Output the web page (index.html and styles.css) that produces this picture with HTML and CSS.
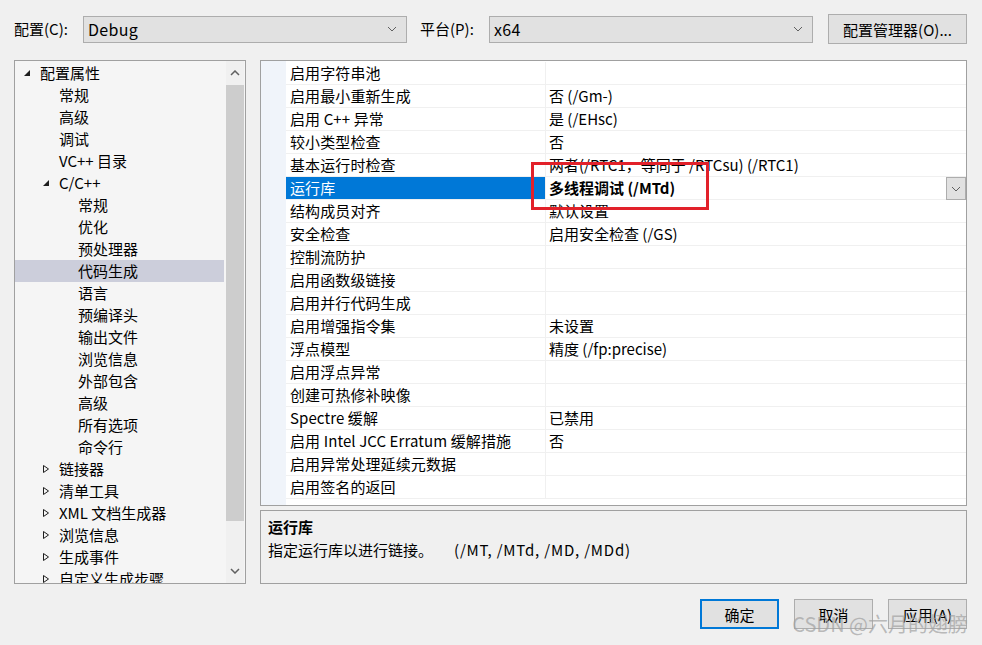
FILE: index.html
```html
<!DOCTYPE html>
<html lang="zh-CN">
<head>
  <meta charset="UTF-8" />
  <title>代码生成 属性页</title>
  <link rel="stylesheet" href="styles.css">
</head>
<body>

  <!-- Config bar -->
  <div class="topbar">
    <span class="lbl">配置(C):</span>
    <div class="combo"><span>Debug</span><svg class="chev" viewBox="0 0 10 6"><path d="M1 1l4 4 4-4" /></svg></div>
    <span class="lbl lbl2">平台(P):</span>
    <div class="combo"><span>x64</span><svg class="chev" viewBox="0 0 10 6"><path d="M1 1l4 4 4-4" /></svg></div>
    <button class="btn mgr">配置管理器(O)...</button>
  </div>

  <div class="main">
    <!-- Tree -->
    <div class="tree">
      <div class="tree-rows">
        <div class="node lv0"><svg class="tri" viewBox="0 0 8 8"><path d="M7 1v6H1z" /></svg>配置属性</div>
        <div class="node lv1">常规</div>
        <div class="node lv1">高级</div>
        <div class="node lv1">调试</div>
        <div class="node lv1">VC++ 目录</div>
        <div class="node lv1"><svg class="tri" viewBox="0 0 8 8"><path d="M7 1v6H1z" /></svg>C/C++</div>
        <div class="node lv2">常规</div>
        <div class="node lv2">优化</div>
        <div class="node lv2">预处理器</div>
        <div class="node lv2 sel">代码生成</div>
        <div class="node lv2">语言</div>
        <div class="node lv2">预编译头</div>
        <div class="node lv2">输出文件</div>
        <div class="node lv2">浏览信息</div>
        <div class="node lv2">外部包含</div>
        <div class="node lv2">高级</div>
        <div class="node lv2">所有选项</div>
        <div class="node lv2">命令行</div>
        <div class="node lv1"><svg class="tri open" viewBox="0 0 8 10"><path d="M1.5 1.5v7l5-3.5z" /></svg>链接器</div>
        <div class="node lv1"><svg class="tri open" viewBox="0 0 8 10"><path d="M1.5 1.5v7l5-3.5z" /></svg>清单工具</div>
        <div class="node lv1"><svg class="tri open" viewBox="0 0 8 10"><path d="M1.5 1.5v7l5-3.5z" /></svg>XML 文档生成器</div>
        <div class="node lv1"><svg class="tri open" viewBox="0 0 8 10"><path d="M1.5 1.5v7l5-3.5z" /></svg>浏览信息</div>
        <div class="node lv1"><svg class="tri open" viewBox="0 0 8 10"><path d="M1.5 1.5v7l5-3.5z" /></svg>生成事件</div>
        <div class="node lv1"><svg class="tri open" viewBox="0 0 8 10"><path d="M1.5 1.5v7l5-3.5z" /></svg>自定义生成步骤</div>
      </div>
      <div class="vscroll">
        <svg class="arrow" viewBox="0 0 10 6"><path d="M1 5l4-4 4 4" /></svg>
        <div class="thumb"></div>
        <svg class="arrow" viewBox="0 0 10 6"><path d="M1 1l4 4 4-4" /></svg>
      </div>
    </div>

    <div class="right">
      <!-- Property grid -->
      <div class="grid">
        <div class="gutter"></div>
        <div class="props">
          <div class="prow"><div class="pname">启用字符串池</div><div class="pval"></div></div>
          <div class="prow"><div class="pname">启用最小重新生成</div><div class="pval">否 (/Gm-)</div></div>
          <div class="prow"><div class="pname">启用 C++ 异常</div><div class="pval">是 (/EHsc)</div></div>
          <div class="prow"><div class="pname">较小类型检查</div><div class="pval">否</div></div>
          <div class="prow"><div class="pname">基本运行时检查</div><div class="pval">两者(/RTC1，等同于 /RTCsu) (/RTC1)</div></div>
          <div class="prow active"><div class="pname">运行库</div><div class="pval"><b>多线程调试 (/MTd)</b><span class="drop"><svg class="chev" viewBox="0 0 10 6"><path d="M1 1l4 4 4-4" /></svg></span></div></div>
          <div class="prow"><div class="pname">结构成员对齐</div><div class="pval">默认设置</div></div>
          <div class="prow"><div class="pname">安全检查</div><div class="pval">启用安全检查 (/GS)</div></div>
          <div class="prow"><div class="pname">控制流防护</div><div class="pval"></div></div>
          <div class="prow"><div class="pname">启用函数级链接</div><div class="pval"></div></div>
          <div class="prow"><div class="pname">启用并行代码生成</div><div class="pval"></div></div>
          <div class="prow"><div class="pname">启用增强指令集</div><div class="pval">未设置</div></div>
          <div class="prow"><div class="pname">浮点模型</div><div class="pval">精度 (/fp:precise)</div></div>
          <div class="prow"><div class="pname">启用浮点异常</div><div class="pval"></div></div>
          <div class="prow"><div class="pname">创建可热修补映像</div><div class="pval"></div></div>
          <div class="prow"><div class="pname">Spectre 缓解</div><div class="pval">已禁用</div></div>
          <div class="prow"><div class="pname">启用 Intel JCC Erratum 缓解措施</div><div class="pval">否</div></div>
          <div class="prow"><div class="pname">启用异常处理延续元数据</div><div class="pval"></div></div>
          <div class="prow"><div class="pname">启用签名的返回</div><div class="pval"></div></div>
        </div>
        <div class="mark"></div>
      </div>

      <!-- Description -->
      <div class="desc">
        <div class="desc-title">运行库</div>
        <div class="desc-text">指定运行库以进行链接。<span class="opts">(/MT, /MTd, /MD, /MDd)</span></div>
      </div>
    </div>
  </div>

  <!-- Buttons -->
  <div class="footer">
    <button class="btn ok">确定</button>
    <button class="btn">取消</button>
    <button class="btn">应用(A)</button>
  </div>

  <div class="watermark">CSDN @六月的翅膀</div>

</body>
</html>
```

FILE: styles.css
```css
body {
  margin: 0;
  width: 982px;
  height: 645px;
  background: #f0f0f0;
  font-family: "Noto Sans CJK SC", "Liberation Sans", sans-serif;
  font-size: 15px;
  color: #000;
  overflow: hidden;
  position: relative;
}
.topbar {
  display: flex;
  align-items: center;
  height: 30px;
  margin-top: 14px;
  padding-left: 14px;
}
.lbl {
  width: 69px;
  line-height: 20px;
}
.lbl2 {
  margin-left: 13px;
}
.combo {
  width: 309px;
  height: 25px;
  border: 1px solid #adadad;
  background: #e1e1e1;
  display: flex;
  align-items: center;
  justify-content: space-between;
  padding: 0 9px 0 4px;
  box-sizing: content-box;
  line-height: 20px;
}
.combo span {
  font-size: 16px;
  letter-spacing: 0.3px;
}
.chev {
  width: 10px;
  height: 6px;
  fill: none;
  stroke: #606060;
  stroke-width: 1;
}
.btn {
  font-family: inherit;
  font-size: 15px;
  background: #e1e1e1;
  border: 1px solid #adadad;
  height: 30px;
  width: 79px;
  padding: 0;
  color: #000;
}
.mgr {
  width: 139px;
  margin-left: 15px;
}
.main {
  display: flex;
  margin: 16px 0 0 14px;
  height: 524px;
}
.tree {
  width: 230px;
  border: 1px solid #a0a0a0;
  background: #f5f5f5;
  display: flex;
  overflow: hidden;
}
.tree-rows {
  flex: 1;
  padding-top: 1px;
  overflow: hidden;
}
.node {
  height: 22px;
  line-height: 22px;
  display: flex;
  align-items: center;
  white-space: nowrap;
}
.lv0 { padding-left: 25px; }
.lv1 { padding-left: 44px; }
.lv2 { padding-left: 63px; }
.node .tri {
  width: 8px;
  height: 8px;
  margin-left: -17px;
  margin-right: 9px;
  fill: #1e1e1e;
}
.node .tri.open {
  height: 10px;
  fill: none;
  stroke: #1e1e1e;
  stroke-width: 1;
}
.sel {
  background: #cccedb;
  margin-right: 2px;
}
.vscroll {
  width: 18px;
  margin-right: 1px;
  display: flex;
  flex-direction: column;
  align-items: center;
  background: #f0f0f0;
}
.vscroll .arrow {
  width: 10px;
  height: 6px;
  fill: none;
  stroke: #606060;
  stroke-width: 1.5;
  margin: 9px 0;
}
.thumb {
  flex: 1;
  width: 18px;
  background: #cdcdcd;
  margin-bottom: 38px;
}
.right {
  margin-left: 14px;
  width: 707px;
  display: flex;
  flex-direction: column;
  gap: 4px;
}
.grid {
  height: 444px;
  border: 1px solid #a0a0a0;
  background: #fff;
  display: flex;
  position: relative;
}
.gutter {
  width: 25px;
  background: #f0f4fa;
}
.props {
  flex: 1;
  padding-top: 1px;
}
.prow {
  display: flex;
  height: 23px;
  line-height: 22px;
  border-bottom: 1px solid #f0f0f0;
  box-sizing: border-box;
}
.pname {
  width: 255px;
  padding-left: 4px;
  border-right: 1px solid #f0f0f0;
  white-space: nowrap;
  letter-spacing: 0.1px;
}
.pval {
  flex: 1;
  padding-left: 3px;
  display: flex;
  justify-content: space-between;
  white-space: nowrap;
}
.active .pname {
  background: #0078d7;
  color: #fff;
}
.drop {
  width: 18px;
  height: 21px;
  border: 1px solid #adadad;
  background: #e1e1e1;
  display: flex;
  align-items: center;
  justify-content: center;
}
.mark {
  position: absolute;
  left: 270px;
  top: 101px;
  width: 172px;
  height: 42px;
  border: 3px solid #e2212a;
}
.desc {
  flex: 1;
  border: 1px solid #a0a0a0;
  padding: 4px 7px;
  line-height: 23px;
}
.desc-title {
  font-weight: bold;
}
.opts {
  margin-left: 21px;
  letter-spacing: 0.8px;
}
.footer {
  display: flex;
  justify-content: flex-end;
  gap: 15px;
  padding-right: 15px;
  margin-top: 15px;
}
.ok {
  border: 2px solid #0078d7;
}
.watermark {
  position: absolute;
  right: 14px;
  bottom: 7px;
  font-size: 20px;
  color: rgba(160, 160, 160, 0.7);
}
```
